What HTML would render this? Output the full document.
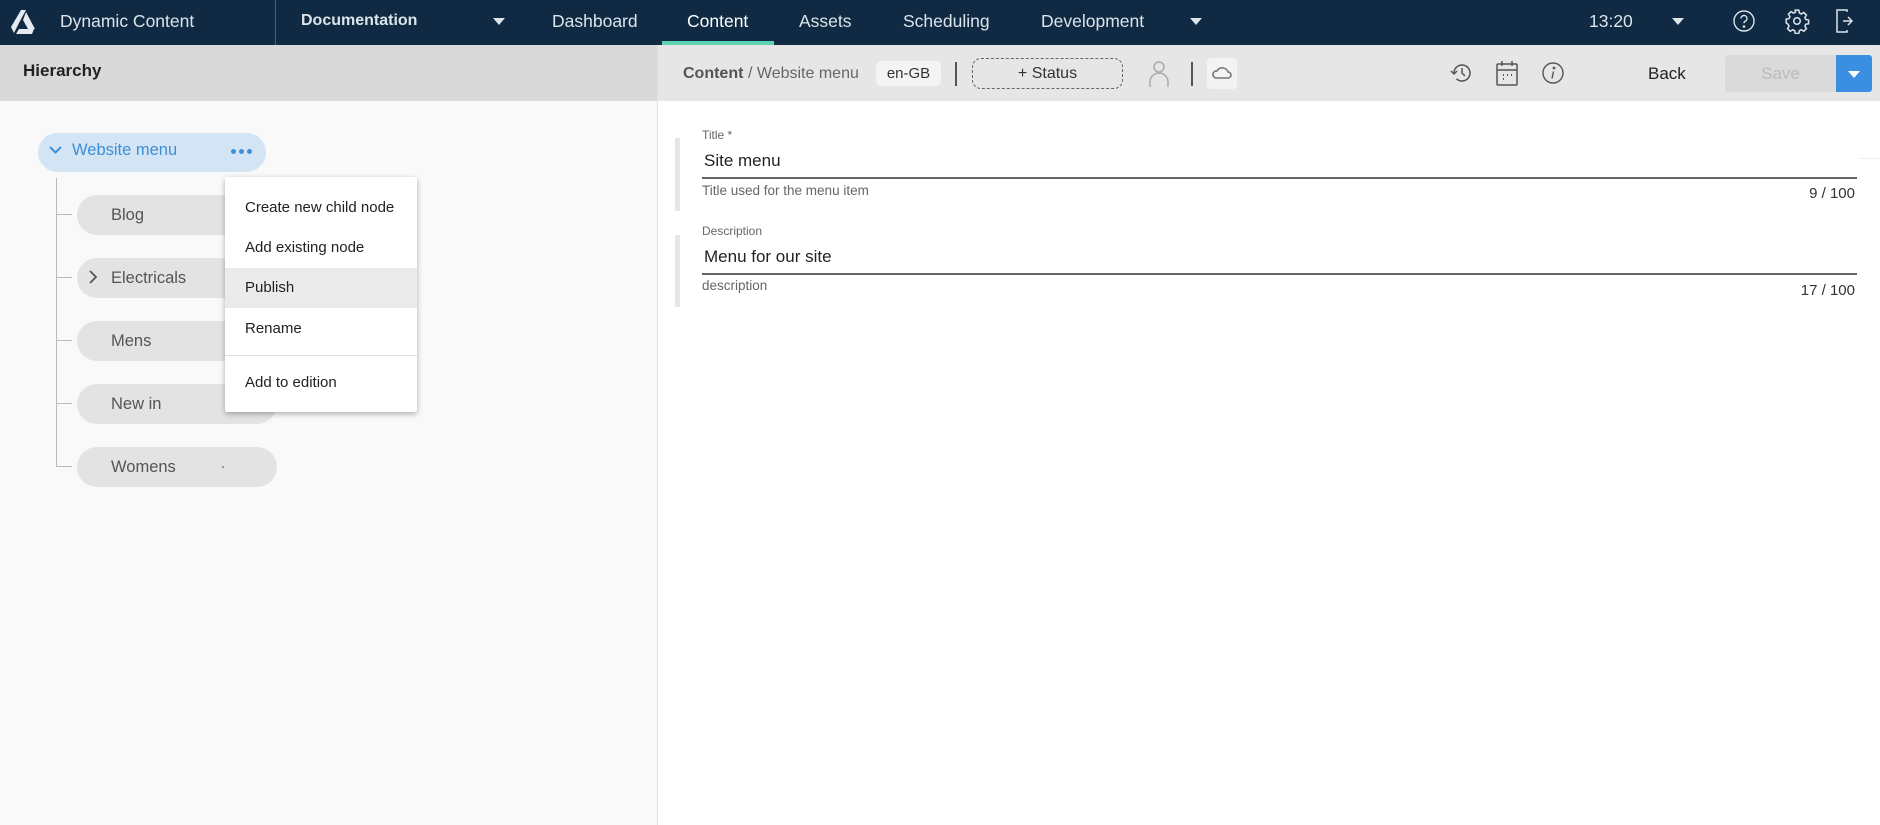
<!DOCTYPE html>
<html><head><meta charset="utf-8"><style>
*{box-sizing:border-box;margin:0;padding:0}
body{width:1880px;height:825px;overflow:hidden;font-family:"Liberation Sans",sans-serif;background:#fff;position:relative}
.a{position:absolute;white-space:nowrap}
.nav{position:absolute;left:0;top:0;width:1880px;height:45px;background:#0f2a42}
.nv{position:absolute;top:11px;color:#dce4ea;font-size:17.5px}
.car{position:absolute;width:0;height:0;border-left:6px solid transparent;border-right:6px solid transparent;border-top:7px solid #dce4ea;top:18px}
.pill{position:absolute;left:77px;width:200px;height:40px;border-radius:20px;background:#e3e3e3;color:#555;font-size:16.5px;line-height:40px;padding-left:34px}
.mi{position:absolute;left:0;width:192px;height:40px;line-height:40px;padding-left:20px;font-size:15px;color:#222}
.lab{position:absolute;left:702px;font-size:12px;color:#666}
.val{position:absolute;left:704px;font-size:17px;color:#222}
.ul{position:absolute;left:702px;width:1155px;height:1.5px;background:#666}
.bar{position:absolute;left:675px;width:5px;background:#e6e6e6}
.cnt{position:absolute;right:25px;font-size:15px;color:#333}
</style></head><body>
<div class="nav"></div>
<svg class="a" style="left:10px;top:9px" width="26" height="26" viewBox="0 0 26 26"><path d="M11 1 L16 1 L9 14 L4 24 L1 18 Z" fill="#e4eaf0"/><path d="M16 3 L25 20 L18 20 L13 11 Z" fill="#e4eaf0"/><path d="M9 20 L24 20 L22 25 L6 25 Z" fill="#e4eaf0"/></svg>
<div class="nv" style="left:60px">Dynamic Content</div>
<div class="a" style="left:275px;top:0;width:1px;height:45px;background:#4a5f72"></div>
<div class="nv" style="left:301px;font-weight:bold;font-size:16px;top:12px">Documentation</div>
<div class="car" style="left:493px"></div>
<div class="nv" style="left:552px">Dashboard</div>
<div class="nv" style="left:687px;color:#fff">Content</div>
<div class="a" style="left:662px;top:41px;width:112px;height:4px;background:#5fd3b0"></div>
<div class="nv" style="left:799px">Assets</div>
<div class="nv" style="left:903px">Scheduling</div>
<div class="nv" style="left:1041px">Development</div>
<div class="car" style="left:1190px"></div>
<div class="nv" style="left:1589px">13:20</div>
<div class="car" style="left:1672px"></div>
<svg class="a" style="left:1732px;top:9px" width="24" height="24" viewBox="0 0 24 24" fill="none" stroke="#dce4ea" stroke-width="1.4"><circle cx="12" cy="12" r="10"/><path d="M9 9.5a3 3 0 1 1 4 2.8c-.8.4-1 1-1 2"/><circle cx="12" cy="17.5" r=".6" fill="#dce4ea"/></svg>
<svg class="a" style="left:1784px;top:8px" width="26" height="26" viewBox="0 0 24 24" fill="none" stroke="#dce4ea" stroke-width="1.4"><circle cx="12" cy="12" r="3"/><path d="M10.3 2h3.4l.5 2.6 1.8.9 2.3-1.4 2.4 2.4-1.4 2.3.8 1.8 2.6.5v3.4l-2.6.5-.8 1.8 1.4 2.3-2.4 2.4-2.3-1.4-1.8.8-.5 2.6h-3.4l-.5-2.6-1.8-.8-2.3 1.4-2.4-2.4 1.4-2.3-.9-1.8L2 13.7v-3.4l2.6-.5.9-1.8-1.4-2.3 2.4-2.4 2.3 1.4 1.8-.9z"/></svg>
<svg class="a" style="left:1834px;top:8px" width="24" height="26" viewBox="0 0 24 26" fill="none" stroke="#dce4ea" stroke-width="1.5"><path d="M13 4V2H3v22h10v-2"/><path d="M9 13h8M14 9l4 4-4 4" /></svg>

<div class="a" style="left:0;top:45px;width:657px;height:56px;background:#d9d9d9"></div>
<div class="a" style="left:657px;top:45px;width:1223px;height:56px;background:#e6e6e6"></div>
<div class="a" style="left:23px;top:61px;font-size:17px;font-weight:bold;color:#222">Hierarchy</div>
<div class="a" style="left:0;top:101px;width:657px;height:724px;background:#f9f9f9"></div>
<div class="a" style="left:657px;top:45px;width:1px;height:780px;background:#e0e0e0"></div>

<div class="a" style="left:683px;top:65px;font-size:16px;font-weight:bold;color:#555">Content</div>
<div class="a" style="left:748px;top:65px;font-size:16px;color:#666">/ Website menu</div>
<div class="a" style="left:876px;top:61px;width:65px;height:25px;border-radius:5px;background:#f4f4f4;font-size:15px;color:#333;text-align:center;line-height:25px">en-GB</div>
<div class="a" style="left:955px;top:62px;width:1.5px;height:24px;background:#555"></div>
<div class="a" style="left:972px;top:58px;width:151px;height:31px;border:1.5px dashed #666;border-radius:9px;font-size:16px;color:#333;text-align:center;line-height:30px">+ Status</div>
<svg class="a" style="left:1148px;top:60px" width="22" height="28" viewBox="0 0 22 28" fill="none" stroke="#aaa" stroke-width="1.5"><circle cx="11" cy="7" r="5"/><path d="M2 27v-5a9 9 0 0 1 18 0v5"/></svg>
<div class="a" style="left:1191px;top:62px;width:1.5px;height:24px;background:#555"></div>
<div class="a" style="left:1207px;top:58px;width:30px;height:31px;border-radius:4px;background:#f3f3f3"></div>
<svg class="a" style="left:1212px;top:66px" width="20" height="14" viewBox="0 0 20 14" fill="none" stroke="#777" stroke-width="1.6"><path d="M4 12h12a3 3 0 0 0 0-6 6 6 0 0 0-11-1 3.5 3.5 0 0 0-1 7z"/></svg>
<svg class="a" style="left:1450px;top:61px" width="24" height="24" viewBox="0 0 24 24" fill="none" stroke="#555" stroke-width="1.5"><path d="M4 12a8 8 0 1 1 2.5 5.8"/><path d="M1 10l3 3 3-3"/><path d="M12 7v5l3 3"/></svg>
<svg class="a" style="left:1495px;top:60px" width="24" height="27" viewBox="0 0 24 27" fill="none" stroke="#555" stroke-width="1.5"><rect x="2" y="4" width="20" height="21" rx="1"/><path d="M2 10h20M7 1v5M17 1v5"/><path d="M8 15h1M12 15h1M16 15h1M8 19h1" stroke-width="2"/></svg>
<svg class="a" style="left:1541px;top:61px" width="24" height="24" viewBox="0 0 24 24" fill="none" stroke="#555" stroke-width="1.4"><circle cx="12" cy="12" r="10"/><path d="M12.5 10.5l-1.5 7"/><circle cx="13" cy="7" r=".7" fill="#555"/></svg>
<div class="a" style="left:1648px;top:64px;font-size:17px;color:#222">Back</div>
<div class="a" style="left:1725px;top:55px;width:111px;height:37px;background:#dadada;border-radius:3px 0 0 3px;color:#bbb;font-size:17px;text-align:center;line-height:37px">Save</div>
<div class="a" style="left:1836px;top:55px;width:36px;height:37px;background:#3b8fe0;border-radius:0 3px 3px 0"></div>
<div class="car" style="left:1848px;top:71px;border-top-color:#fff;border-left-width:6px;border-right-width:6px"></div>

<!-- tree -->
<div class="a" style="left:56px;top:178px;width:1px;height:289px;background:#bbb"></div>
<div class="a" style="left:56px;top:214px;width:16px;height:1px;background:#bbb"></div>
<div class="a" style="left:56px;top:277px;width:16px;height:1px;background:#bbb"></div>
<div class="a" style="left:56px;top:340px;width:16px;height:1px;background:#bbb"></div>
<div class="a" style="left:56px;top:403px;width:16px;height:1px;background:#bbb"></div>
<div class="a" style="left:56px;top:466px;width:16px;height:1px;background:#bbb"></div>
<div class="a" style="left:38px;top:133px;width:228px;height:39px;border-radius:20px;background:#d3e5f5"></div>
<svg class="a" style="left:49px;top:145px" width="13" height="10" viewBox="0 0 13 10" fill="none" stroke="#3d8fd6" stroke-width="2"><path d="M1 2l5.5 5.5L12 2"/></svg>
<div class="a" style="left:72px;top:141px;font-size:16.5px;color:#3d8fd6">Website menu</div>
<div class="a" style="left:231px;top:149px;width:5px;height:5px;border-radius:3px;background:#3d8fd6;box-shadow:8px 0 #3d8fd6,16px 0 #3d8fd6"></div>
<div class="pill" style="top:195px">Blog</div>
<div class="pill" style="top:258px">Electricals</div>
<svg class="a" style="left:88px;top:270px" width="10" height="14" viewBox="0 0 10 14" fill="none" stroke="#555" stroke-width="1.8"><path d="M2 1l6 6-6 6"/></svg>
<div class="pill" style="top:321px">Mens</div>
<div class="pill" style="top:384px">New in</div>
<div class="pill" style="top:447px">Womens</div>
<div class="a" style="left:222px;top:466px;width:2px;height:2px;background:#999"></div>

<div class="a" style="left:225px;top:177px;width:192px;height:235px;background:#fff;box-shadow:0 2px 6px rgba(0,0,0,.3);border-radius:2px">
<div class="mi" style="top:11px">Create new child node</div>
<div class="mi" style="top:51px">Add existing node</div>
<div class="mi" style="top:91px;background:#ebebeb">Publish</div>
<div class="mi" style="top:132px">Rename</div>
<div class="a" style="left:0;top:178px;width:192px;height:1px;background:#e0e0e0"></div>
<div class="mi" style="top:186px">Add to edition</div>
</div>

<!-- form -->
<div class="bar" style="top:138px;height:73px"></div>
<div class="lab" style="top:128px">Title *</div>
<div class="val" style="top:151px">Site menu</div>
<div class="ul" style="top:177px"></div>
<div class="lab" style="top:183px;font-size:13.5px">Title used for the menu item</div>
<div class="cnt" style="top:185px">9 / 100</div>
<div class="a" style="left:1860px;top:158px;width:20px;height:1px;background:#eee"></div>
<div class="bar" style="top:235px;height:72px"></div>
<div class="lab" style="top:224px">Description</div>
<div class="val" style="top:247px">Menu for our site</div>
<div class="ul" style="top:273px"></div>
<div class="lab" style="top:278px;font-size:13.5px">description</div>
<div class="cnt" style="top:282px">17 / 100</div>
</body></html>
